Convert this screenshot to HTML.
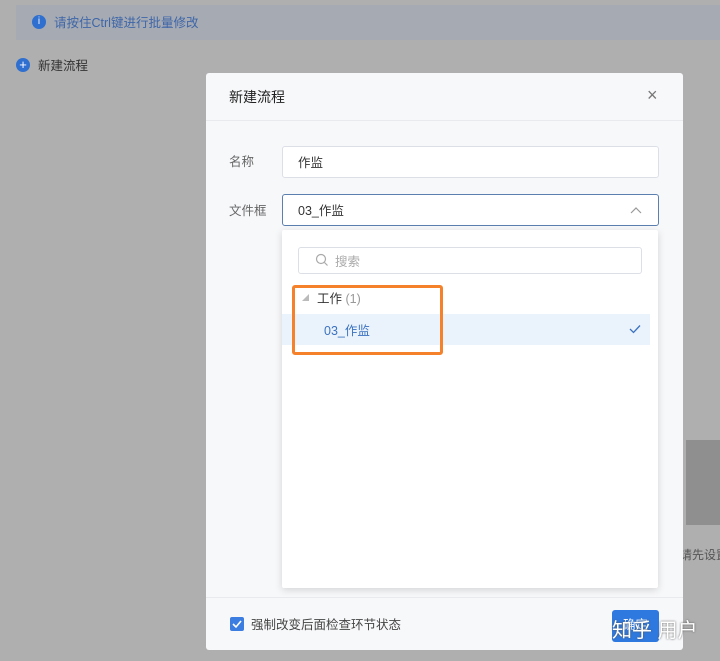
<!DOCTYPE html>
<html><head><meta charset="utf-8"><style>
*{box-sizing:border-box;margin:0;padding:0}
body{width:720px;height:661px;overflow:hidden;background:#afafaf;font-family:"Liberation Sans","Noto Sans CJK SC",sans-serif;font-size:12.5px;position:relative;color:#333}
.abs{position:absolute;white-space:nowrap}
</style></head><body>
<div class="abs" style="left:16px;top:5px;width:704px;height:35px;background:#a5aab3"></div>
<div class="abs" style="left:32px;top:15px;width:14px;height:14px;border-radius:50%;background:#2f6fcf;color:#fff;font-size:10px;text-align:center;line-height:14px">i</div>
<div class="abs" style="left:54px;top:12px;color:#3e66a8">请按住Ctrl键进行批量修改</div>
<div class="abs" style="left:16px;top:58px;width:14px;height:14px;border-radius:50%;background:#2f6fcf;color:#fff;font-size:13px;text-align:center;line-height:13px">+</div>
<div class="abs" style="left:38px;top:55px;color:#333">新建流程</div>
<div class="abs" style="left:686px;top:440px;width:34px;height:85px;background:#8f8f8f"></div>
<div class="abs" style="left:680px;top:546px;color:#555;font-size:12px">请先设置</div>

<div class="abs" style="left:206px;top:73px;width:477px;height:577px;background:#f7f8fa;border-radius:3px">
  <div class="abs" style="left:0;top:0;width:477px;height:48px;border-bottom:1px solid #e8eaee"></div>
  <div class="abs" style="left:23px;top:14px;font-size:14px;color:#222">新建流程</div>
  <div class="abs" style="left:441px;top:12px;font-size:18px;color:#777">×</div>
  <div class="abs" style="left:23px;top:78px;color:#666">名称</div>
  <div class="abs" style="left:76px;top:73px;width:377px;height:32px;background:#fff;border:1px solid #dcdfe6;border-radius:3px;padding:5px 15px">作监</div>
  <div class="abs" style="left:23px;top:127px;color:#666">文件框</div>
  <div class="abs" style="left:76px;top:121px;width:377px;height:32px;background:#fff;border:1px solid #5b7fae;border-radius:3px;padding:5px 15px">03_作监</div>
  <svg class="abs" style="left:424px;top:133px" width="12" height="8"><path d="M1 7L6 2L11 7" fill="none" stroke="#999" stroke-width="1.2"/></svg>
  <div class="abs" style="left:0;top:524px;width:477px;height:1px;background:#e8eaee"></div>
  <div class="abs" style="left:24px;top:544px;width:14px;height:14px;background:#3b7de0;border-radius:2px"></div>
  <svg class="abs" style="left:24px;top:544px" width="14" height="14"><path d="M3 7L6 10L11 4" fill="none" stroke="#fff" stroke-width="1.6"/></svg>
  <div class="abs" style="left:45px;top:541px;color:#444">强制改变后面检查环节状态</div>
  <div class="abs" style="left:406px;top:537px;width:47px;height:32px;background:#2e79e0;border-radius:3px;color:#fff;text-align:center;line-height:30px">确定</div>
</div>

<div class="abs" style="left:282px;top:230px;width:376px;height:358px;background:#fff;box-shadow:0 2px 8px rgba(0,0,0,.15);border-radius:2px">
  <div class="abs" style="left:16px;top:17px;width:344px;height:27px;border:1px solid #dcdfe6;border-radius:3px"></div>
  <svg class="abs" style="left:33px;top:23px" width="14" height="14"><circle cx="6" cy="6" r="4.5" fill="none" stroke="#aaa" stroke-width="1.2"/><path d="M9.5 9.5L12.5 12.5" stroke="#aaa" stroke-width="1.2"/></svg>
  <div class="abs" style="left:53px;top:21px;color:#aaa">搜索</div>
  <svg class="abs" style="left:20px;top:64px" width="7" height="7"><path d="M7 0L7 7L0 7Z" fill="#bbb"/></svg>
  <div class="abs" style="left:35px;top:58px;color:#333">工作 <span style="color:#999">(1)</span></div>
  <div class="abs" style="left:0;top:84px;width:368px;height:31px;background:#eaf3fc"></div>
  <div class="abs" style="left:42px;top:90px;color:#3b72c0">03_作监</div>
  <svg class="abs" style="left:347px;top:94px" width="12" height="10"><path d="M1 5L4.5 8.5L11 1.5" fill="none" stroke="#3b72c0" stroke-width="1.3"/></svg>
</div>
<div class="abs" style="left:292px;top:285px;width:151px;height:70px;border:3px solid #f5822a;border-radius:3px"></div>
<div class="abs" style="left:612px;top:614px;color:#fff;font-size:20px;text-shadow:0 0 2px #555">知乎 用户</div>
</body></html>
